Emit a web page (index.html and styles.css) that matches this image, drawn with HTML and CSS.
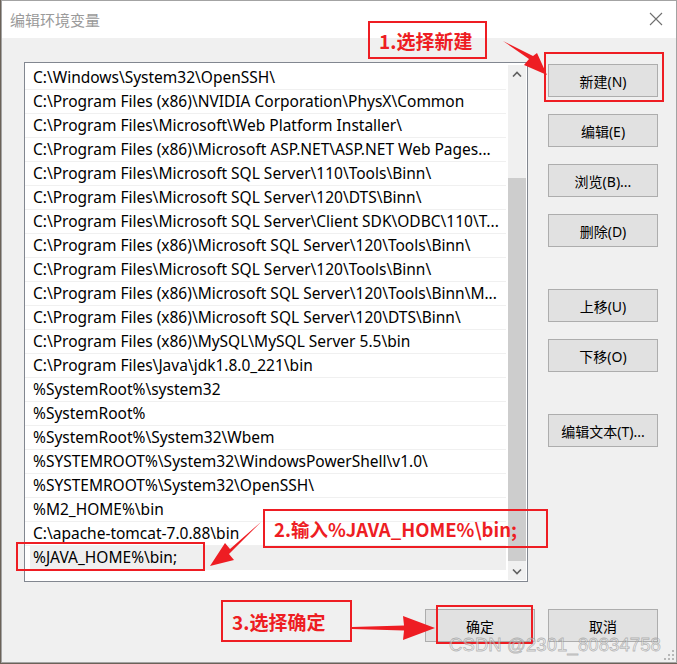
FILE: index.html
```html
<!DOCTYPE html>
<html lang="zh-CN">

<head>
	<meta charset="UTF-8">
	<meta name="viewport" content="width=device-width, initial-scale=1.0">
	<title>编辑环境变量</title>
	<link rel="stylesheet" href="styles.css">
</head>

<body>
	<div class="window">
		<div class="titlebar">
			<span class="title">编辑环境变量</span>
			<svg class="close" width="14" height="14" viewBox="0 0 14 14">
				<path d="M1 1 L13 13 M13 1 L1 13" stroke="#6f6f6f" stroke-width="1.1" fill="none" />
			</svg>
		</div>
		<div class="main">
			<div class="list">
				<div class="rows">
					<div class="row">C:\Windows\System32\OpenSSH\</div>
					<div class="row">C:\Program Files (x86)\NVIDIA Corporation\PhysX\Common</div>
					<div class="row">C:\Program Files\Microsoft\Web Platform Installer\</div>
					<div class="row">C:\Program Files (x86)\Microsoft ASP.NET\ASP.NET Web Pages...</div>
					<div class="row">C:\Program Files\Microsoft SQL Server\110\Tools\Binn\</div>
					<div class="row">C:\Program Files\Microsoft SQL Server\120\DTS\Binn\</div>
					<div class="row">C:\Program Files\Microsoft SQL Server\Client SDK\ODBC\110\T...</div>
					<div class="row">C:\Program Files (x86)\Microsoft SQL Server\120\Tools\Binn\</div>
					<div class="row">C:\Program Files\Microsoft SQL Server\120\Tools\Binn\</div>
					<div class="row">C:\Program Files (x86)\Microsoft SQL Server\120\Tools\Binn\M...</div>
					<div class="row">C:\Program Files (x86)\Microsoft SQL Server\120\DTS\Binn\</div>
					<div class="row">C:\Program Files (x86)\MySQL\MySQL Server 5.5\bin</div>
					<div class="row">C:\Program Files\Java\jdk1.8.0_221\bin</div>
					<div class="row">%SystemRoot%\system32</div>
					<div class="row">%SystemRoot%</div>
					<div class="row">%SystemRoot%\System32\Wbem</div>
					<div class="row">%SYSTEMROOT%\System32\WindowsPowerShell\v1.0\</div>
					<div class="row">%SYSTEMROOT%\System32\OpenSSH\</div>
					<div class="row">%M2_HOME%\bin</div>
					<div class="row">C:\apache-tomcat-7.0.88\bin</div>
					<div class="row editing">%JAVA_HOME%\bin;</div>
				</div>
				<div class="scrollbar">
					<div class="arrow">
						<svg width="10" height="6" viewBox="0 0 10 6">
							<path d="M1 5.5 L5 1.5 L9 5.5" stroke="#606060" stroke-width="1.6" fill="none" />
						</svg>
					</div>
					<div class="track">
						<div class="thumb"></div>
					</div>
					<div class="arrow">
						<svg width="10" height="6" viewBox="0 0 10 6">
							<path d="M1 0.5 L5 4.5 L9 0.5" stroke="#606060" stroke-width="1.6" fill="none" />
						</svg>
					</div>
				</div>
			</div>
			<div class="side">
				<button type="button">新建(N)</button>
				<button type="button">编辑(E)</button>
				<button type="button">浏览(B)...</button>
				<button type="button">删除(D)</button>
				<button type="button" class="spaced">上移(U)</button>
				<button type="button">下移(O)</button>
				<button type="button" class="spaced">编辑文本(T)...</button>
			</div>
		</div>
		<div class="footer">
			<button type="button">确定</button>
			<button type="button">取消</button>
		</div>
		<svg class="grip" width="12" height="12" viewBox="0 0 12 12">
			<g fill="#b8b8b8">
				<rect x="9" y="1" width="2" height="2" />
				<rect x="5" y="5" width="2" height="2" />
				<rect x="9" y="5" width="2" height="2" />
				<rect x="1" y="9" width="2" height="2" />
				<rect x="5" y="9" width="2" height="2" />
				<rect x="9" y="9" width="2" height="2" />
			</g>
		</svg>
	</div>

	<!-- annotations drawn over the dialog -->
	<div class="note note-1">1.选择新建</div>
	<div class="mark mark-new"></div>
	<svg class="pointer pointer-1" width="50" height="40" viewBox="0 0 50 40">
		<polygon points="1,2 27,20 22,26 45,36 35,14 31,17" fill="#ee1d23" />
	</svg>

	<div class="note note-2">2.输入%JAVA_HOME%\bin;</div>
	<div class="mark mark-row"></div>
	<svg class="pointer pointer-2" width="56" height="48" viewBox="0 0 56 48">
		<polygon points="54,1 23,28 18,22 3,45 27,39 22,33" fill="#ee1d23" />
	</svg>

	<div class="note note-3">3.选择确定</div>
	<div class="mark mark-ok"></div>
	<svg class="pointer pointer-3" width="84" height="28" viewBox="0 0 84 28">
		<polygon points="0,13 52,11.5 51,2 83,14 51,26 52,16.5 0,15" fill="#ee1d23" />
	</svg>

	<div class="watermark">CSDN @2301_80834758</div>
</body>

</html>
```

FILE: styles.css
```css
* {
	box-sizing: border-box;
}

body {
	margin: 0;
	width: 677px;
	height: 664px;
	background-color: #6b6258;
	position: relative;
	overflow: hidden;
	font-family: 'Noto Sans', 'Noto Sans CJK SC', sans-serif;
}

.window {
	position: relative;
	margin-left: 1px;
	width: 676px;
	height: 663px;
	border: 1px solid #a3a3a3;
	background-color: #f0f0f0;
}

.titlebar {
	height: 37px;
	background-color: #fff;
	display: flex;
	align-items: center;
	justify-content: space-between;
	padding: 0 13px 0 8px;
}

.title {
	font-family: 'Noto Sans CJK SC', sans-serif;
	font-size: 15px;
	color: #9a9a9a;
	margin-top: -1px;
}

.close {
	margin-top: -1px;
}

.main {
	display: flex;
	gap: 20px;
	padding: 24px 0 0 22px;
}

.list {
	width: 504px;
	height: 520px;
	border: 1px solid #828790;
	background-color: #fff;
	display: flex;
	padding: 3px 1px 1px 0;
}

.rows {
	flex: 1;
	overflow: hidden;
}

.row {
	height: 24px;
	line-height: 23px;
	padding-left: 8px;
	border-bottom: 1px solid #f0f0f0;
	font-size: 15.5px;
	color: #000;
	white-space: nowrap;
	overflow: hidden;
	margin-right: 2px;
}

.row.editing {
	background-color: #efefef;
	border-bottom: none;
	margin-left: 5px;
	padding-left: 3px;
}

.scrollbar {
	width: 18px;
	display: flex;
	flex-direction: column;
	background-color: #f0f0f0;
	margin-top: -1px;
}

.arrow {
	height: 17px;
	display: flex;
	align-items: center;
	justify-content: center;
}

.track {
	flex: 1;
	padding-top: 96px;
	padding-bottom: 2px;
}

.thumb {
	height: 100%;
	background-color: #cdcdcd;
}

.side {
	display: flex;
	flex-direction: column;
	gap: 17px;
	padding-top: 2px;
}

button {
	width: 110px;
	height: 33px;
	border: 1px solid #adadad;
	background-color: #e1e1e1;
	font-family: 'Noto Sans', 'Noto Sans CJK SC', sans-serif;
	font-size: 14px;
	color: #000;
	padding: 0;
}

.side .spaced {
	margin-top: 25px;
}

.footer {
	display: flex;
	justify-content: flex-end;
	gap: 13px;
	padding: 27px 18px 0 0;
}

.grip {
	position: absolute;
	right: 1px;
	bottom: 1px;
}

.note {
	position: absolute;
	border: 2px solid #ee1d23;
	color: #ee1d23;
	font-family: 'Noto Sans CJK SC', sans-serif;
	font-weight: 700;
	font-size: 19px;
	display: flex;
	align-items: center;
	padding-left: 9px;
	white-space: nowrap;
}

.note-1 {
	left: 368px;
	top: 21px;
	width: 119px;
	height: 38px;
}

.note-2 {
	left: 263px;
	top: 509px;
	width: 285px;
	height: 39px;
	font-size: 18.5px;
}

.note-3 {
	left: 221px;
	top: 600px;
	width: 131px;
	height: 42px;
}

.mark {
	position: absolute;
	border: 2px solid #ee1d23;
}

.mark-new {
	left: 544px;
	top: 52px;
	width: 120px;
	height: 50px;
}

.mark-row {
	left: 16px;
	top: 542px;
	width: 189px;
	height: 29px;
}

.mark-ok {
	left: 436px;
	top: 605px;
	width: 97px;
	height: 39px;
}

.pointer {
	position: absolute;
}

.pointer-1 {
	left: 502px;
	top: 39px;
}

.pointer-2 {
	left: 207px;
	top: 521px;
}

.pointer-3 {
	left: 352px;
	top: 614px;
}

.watermark {
	position: absolute;
	left: 449px;
	top: 634px;
	font-family: 'Liberation Sans', sans-serif;
	font-size: 18.5px;
	color: rgba(255, 255, 255, 0.45);
	-webkit-text-stroke: 0.8px rgba(130, 130, 130, 0.55);
	letter-spacing: 0.1px;
	white-space: nowrap;
}
```
